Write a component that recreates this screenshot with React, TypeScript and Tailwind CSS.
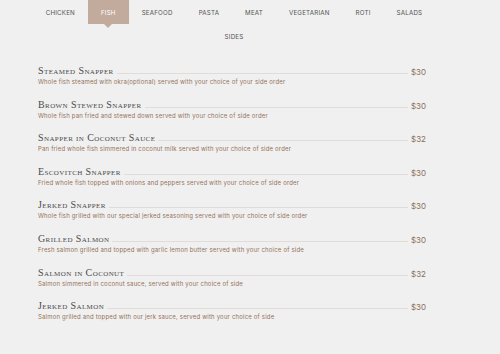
import React from "react";

const cats = ["CHICKEN", "FISH", "SEAFOOD", "PASTA", "MEAT", "VEGETARIAN", "ROTI", "SALADS", "SIDES"];

const items = [
  ["Steamed Snapper", "Whole fish steamed with okra(optional) served with your choice of your side order", "$30"],
  ["Brown Stewed Snapper", "Whole fish pan fried and stewed down served with your choice of side order", "$30"],
  ["Snapper in Coconut Sauce", "Pan fried whole fish simmered in coconut milk served with your choice of side order", "$32"],
  ["Escovitch Snapper", "Fried whole fish topped with onions and peppers served with your choice of side order", "$30"],
  ["Jerked Snapper", "Whole fish grilled with our special jerked seasoning served with your choice of side order", "$30"],
  ["Grilled Salmon", "Fresh salmon grilled and topped with garlic lemon butter served with your choice of side", "$30"],
  ["Salmon in Coconut", "Salmon simmered in coconut sauce, served with your choice of side", "$32"],
  ["Jerked Salmon", "Salmon grilled and topped with our jerk sauce, served with your choice of side", "$30"],
];

export default function App() {
  return (
    <div className="w-[500px] h-[354px] bg-[#f0f0f0] overflow-hidden" style={{ fontFamily: "Inter, 'Open Sans', sans-serif" }}>
      <nav className="ml-[14px] w-[440px] flex flex-wrap justify-center">
        {cats.map((c) => (
          <div
            key={c}
            className={
              "relative h-[24px] px-[13px] pt-[2px] flex items-center text-[6.2px] tracking-[0.2px] " +
              (c === "FISH" ? "bg-[#c2ab9c] text-white" : "text-[#555]")
            }
          >
            {c}
            {c === "FISH" && (
              <span className="absolute left-1/2 -translate-x-1/2 top-full w-0 h-0 border-l-[4px] border-r-[4px] border-t-[4px] border-l-transparent border-r-transparent border-t-[#c2ab9c]" />
            )}
          </div>
        ))}
      </nav>
      <div className="ml-[38px] w-[388px] mt-[17px] flex flex-col gap-[12.6px]">
        {items.map(([t, d, p]) => (
          <div key={t} className="flex flex-col">
            <div className="flex items-end h-[11px]">
              <span
                className="text-[10px] leading-none text-[#4a4a4a] tracking-[0.4px]"
                style={{ fontFamily: "'Liberation Serif', serif", fontVariant: "small-caps" }}
              >
                {t}
              </span>
              <span className="flex-1 mx-[3px] mb-[2px] border-b border-[#e2dcd8]" />
              <span className="text-[8px] leading-none text-[#8a6f5a]">{p}</span>
            </div>
            <div className="text-[6px] tracking-[0.18px] leading-[9px] text-[#94725a] mt-[1px]">{d}</div>
          </div>
        ))}
      </div>
    </div>
  );
}
